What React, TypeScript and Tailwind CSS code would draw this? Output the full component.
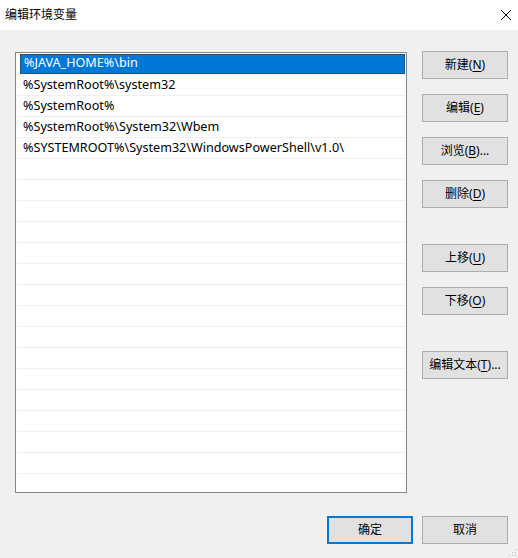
import React from 'react';

const paths = [
  '%JAVA_HOME%\\bin',
  '%SystemRoot%\\system32',
  '%SystemRoot%',
  '%SystemRoot%\\System32\\Wbem',
  '%SYSTEMROOT%\\System32\\WindowsPowerShell\\v1.0\\',
];

const font = { fontFamily: '"Segoe UI", "Noto Sans", "Noto Sans CJK SC", sans-serif' };

function Btn({ label, mnemonic, rest = '', className = '' }: { label: string; mnemonic?: string; rest?: string; className?: string }) {
  return (
    <button className={`w-[86px] h-[28px] border border-[#adadad] bg-[#e1e1e1] text-[12px] text-black flex items-center justify-center ${className}`}>
      {label}
      {mnemonic && (
        <>
          (<span className="underline underline-offset-2">{mnemonic}</span>){rest}
        </>
      )}
    </button>
  );
}

export default function App() {
  const rows = Array.from({ length: 21 }, (_, i) => paths[i] ?? '');

  return (
    <div className="w-[518px] h-[558px] bg-[#f0f0f0] flex flex-col relative" style={font}>
      <div className="h-[30px] bg-white flex items-center justify-between pl-[5px] pr-[3px]">
        <span className="text-[12px] text-black">编辑环境变量</span>
        <svg width="12" height="12" viewBox="0 0 12 12" className="mr-[3px]">
          <path d="M1 1 L11 11 M11 1 L1 11" stroke="#000" strokeWidth="1" />
        </svg>
      </div>

      <div className="flex pt-[22px] pl-[15px]">
        <div className="w-[392px] h-[441px] border border-[#828790] bg-white overflow-hidden">
          {rows.map((p, i) =>
            i === 0 ? (
              <div key={i} className="h-[21px] flex items-center pl-[2px] pr-[1px]">
                <div className="h-[20px] flex-1 ml-[2px] bg-[#0078d7] border border-dotted border-[#333] flex items-center pl-[3px] text-[12.6px] text-white">
                  {p}
                </div>
              </div>
            ) : (
              <div key={i} className="h-[21px] flex items-center mx-[1px] border-t border-[#f0f0f0] pl-[6px] text-[12.6px] text-black">
                {p}
              </div>
            )
          )}
        </div>

        <div className="ml-[15px] -mt-[1px] flex flex-col">
          <Btn label="新建" mnemonic="N" />
          <Btn label="编辑" mnemonic="E" className="mt-[15px]" />
          <Btn label="浏览" mnemonic="B" rest="..." className="mt-[15px]" />
          <Btn label="删除" mnemonic="D" className="mt-[15px]" />
          <Btn label="上移" mnemonic="U" className="mt-[36px]" />
          <Btn label="下移" mnemonic="O" className="mt-[15px]" />
          <Btn label="编辑文本" mnemonic="T" rest="..." className="mt-[36px]" />
        </div>
      </div>

      <div className="flex justify-end gap-[9px] pr-[10px] mt-[23px]">
        <button className="w-[86px] h-[28px] border-2 border-[#0078d7] bg-[#e1e1e1] text-[12px] text-black">确定</button>
        <Btn label="取消" />
      </div>

      <svg width="10" height="10" viewBox="0 0 10 10" className="absolute right-[1px] bottom-[1px]">
        {[[8, 8], [5, 8], [2, 8], [8, 5], [5, 5], [8, 2]].map(([x, y], i) => (
          <rect key={i} x={x} y={y} width="1" height="1" fill="#bcbcbc" />
        ))}
      </svg>
    </div>
  );
}
